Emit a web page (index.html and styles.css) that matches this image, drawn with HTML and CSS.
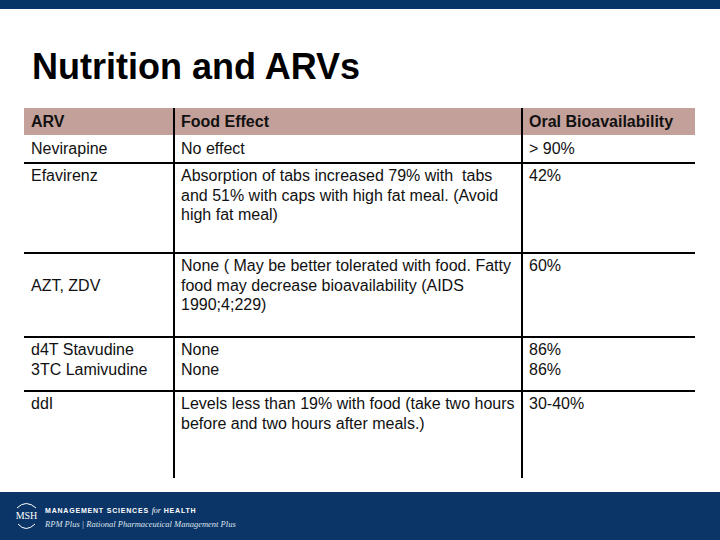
FILE: index.html
```html
<!DOCTYPE html>
<html>
<head>
<meta charset="utf-8">
<link rel="stylesheet" href="styles.css">
</head>
<body>
<div class="slide">
  <div class="topbar"></div>
  <h1 class="title">Nutrition and ARVs</h1>
  <table class="arv">
    <colgroup>
      <col class="c1"><col class="c2"><col class="c3">
    </colgroup>
    <tr class="head">
      <th>ARV</th><th class="div">Food Effect</th><th class="div">Oral Bioavailability</th>
    </tr>
    <tr class="r-nev">
      <td>Nevirapine</td><td class="div">No effect</td><td class="div">&gt; 90%</td>
    </tr>
    <tr class="r-efa sep">
      <td>Efavirenz</td><td class="div">Absorption of tabs increased 79% with &nbsp;tabs and 51% with caps with high fat meal. (Avoid high fat meal)</td><td class="div">42%</td>
    </tr>
    <tr class="r-azt sep">
      <td class="second">AZT, ZDV</td><td class="div">None ( May be better tolerated with food. Fatty food may decrease bioavailability (AIDS 1990;4;229)</td><td class="div">60%</td>
    </tr>
    <tr class="r-d4t sep">
      <td>d4T Stavudine<br>3TC Lamivudine</td><td class="div">None<br>None</td><td class="div">86%<br>86%</td>
    </tr>
    <tr class="r-ddi sep">
      <td>ddI</td><td class="div">Levels less than 19% with food (take two hours before and two hours after meals.)</td><td class="div">30-40%</td>
    </tr>
  </table>
  <footer class="footer">
    <svg class="logo" width="30" height="36" viewBox="0 0 30 36">
      <path d="M5 10 Q14 1 24 10" fill="none" stroke="#ffffff" stroke-width="1"/>
      <path d="M6 26 Q14 35 23 26" fill="none" stroke="#ffffff" stroke-width="1"/>
      <text x="14.5" y="21" text-anchor="middle" class="logo-text">MSH</text>
    </svg>
    <div class="org">
      <div class="org-name">MANAGEMENT SCIENCES <span class="for">for</span> HEALTH</div>
      <div class="org-sub">RPM Plus | Rational Pharmaceutical Management Plus</div>
    </div>
  </footer>
</div>
</body>
</html>
```

FILE: styles.css
```css
html, body {
  margin: 0;
  padding: 0;
  background: #ffffff;
}
.slide {
  width: 720px;
  height: 540px;
  display: flex;
  flex-direction: column;
  font-family: "Liberation Sans", Arial, sans-serif;
  color: #000000;
  overflow: hidden;
}
.topbar {
  height: 9px;
  background: #063466;
  flex: none;
}
.title {
  margin: 37px 0 0 32px;
  font-size: 36px;
  font-weight: bold;
  line-height: 41px;
  height: 62px;
}
.arv {
  margin-left: 24px;
  width: 671px;
  table-layout: fixed;
  border-collapse: separate;
  border-spacing: 0;
  font-size: 16px;
  line-height: 19.5px;
  color: #111111;
}
.c1 { width: 149px; }
.c2 { width: 348px; }
.c3 { width: 174px; }
.arv th, .arv td {
  text-align: left;
  padding: 2px 6px 0 7px;
  vertical-align: top;
}
.arv th {
  background: #c4a09a;
  font-weight: bold;
  vertical-align: middle;
  padding-top: 0;
  height: 27px;
  box-sizing: border-box;
}
.arv .div {
  border-left: 2px solid #000000;
  padding-left: 6px;
}
.r-nev td {
  height: 27px;
  box-sizing: border-box;
  vertical-align: middle;
  padding-top: 0;
}
.sep td {
  border-top: 2px solid #000000;
  box-sizing: border-box;
}
.r-efa td { height: 90px; }
.r-azt td { height: 84px; }
.r-d4t td { height: 54px; }
.r-ddi td { height: 88px; }
.arv td.second { padding-top: 21.5px; }
.footer {
  margin-top: auto;
  height: 48px;
  background: #0b3566;
  display: flex;
  align-items: center;
  padding-left: 12px;
  gap: 3px;
  flex: none;
  color: #ffffff;
}
.logo { flex: none; display: block; }
.logo-text {
  font-family: "Liberation Serif", "Times New Roman", serif;
  font-size: 10px;
  fill: #ffffff;
}
.org {
  display: flex;
  flex-direction: column;
  gap: 4px;
  padding-top: 2px;
}
.org-name {
  font-family: "Liberation Sans", Arial, sans-serif;
  font-weight: bold;
  font-size: 7px;
  letter-spacing: 0.8px;
  line-height: 9px;
}
.for {
  font-family: "Liberation Serif", serif;
  font-style: italic;
  font-weight: normal;
  font-size: 8px;
  letter-spacing: 0;
}
.org-sub {
  font-family: "Liberation Serif", "Times New Roman", serif;
  font-style: italic;
  font-size: 8.5px;
  line-height: 10px;
  color: #dde3ee;
}
```
